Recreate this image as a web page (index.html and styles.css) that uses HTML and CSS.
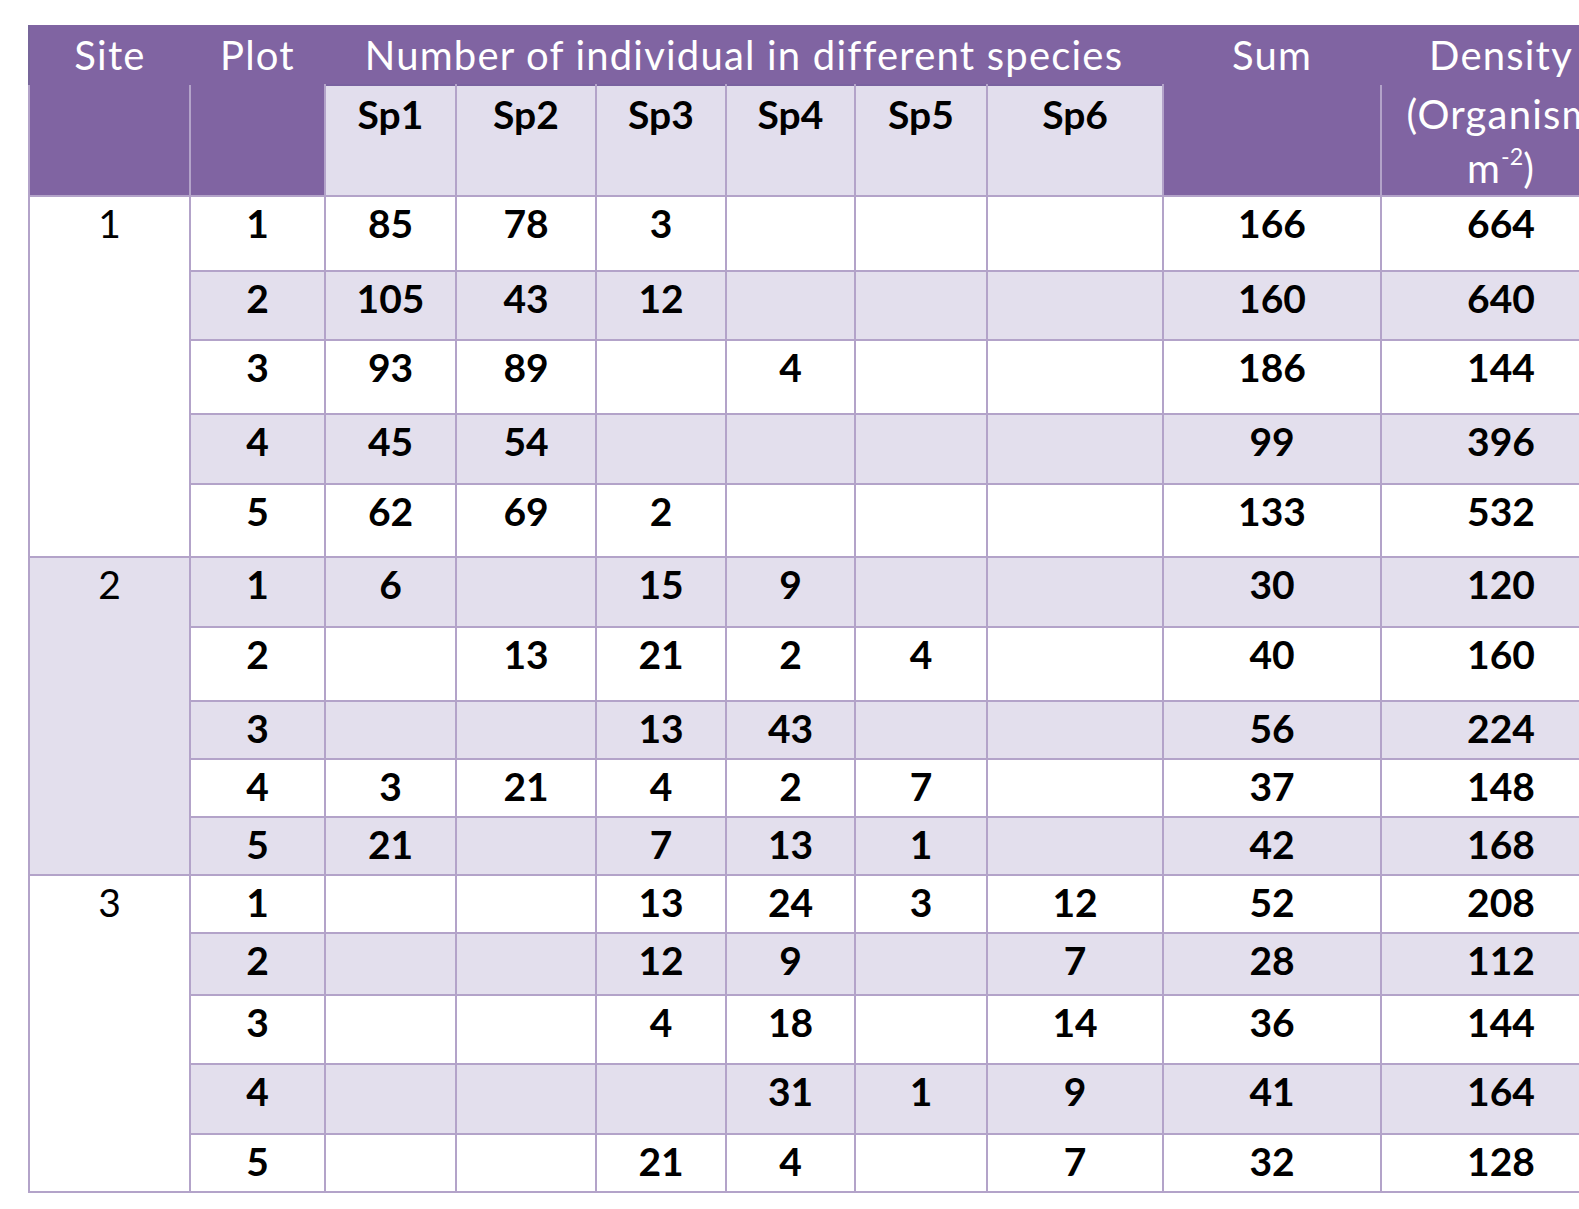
FILE: index.html
```html
<!DOCTYPE html>
<html lang="en">
<head>
<meta charset="utf-8">
<title>Number of individuals per species</title>
<link rel="stylesheet" href="styles.css">
</head>
<body>
<div class="page">
<table class="data">
  <colgroup>
    <col class="c-site"><col class="c-plot">
    <col class="c-sp1"><col class="c-sp2"><col class="c-sp3"><col class="c-sp4"><col class="c-sp5"><col class="c-sp6">
    <col class="c-sum"><col class="c-dens">
  </colgroup>
  <thead>
    <tr class="h1">
      <th class="first">Site</th><th>Plot</th>
      <th colspan="6">Number of individual in different species</th>
      <th>Sum</th><th>Density</th>
    </tr>
    <tr class="h2">
      <th class="blank"></th><th class="blank"></th>
      <th class="sp">Sp1</th><th class="sp">Sp2</th><th class="sp">Sp3</th><th class="sp">Sp4</th><th class="sp">Sp5</th><th class="sp">Sp6</th>
      <th class="blank"></th><th class="blank dens">(Organism<br><span class="unit">m<sup>-2</sup>)</span></th>
    </tr>
  </thead>
  <tbody>
    <tr class="r75"><td class="site" rowspan="5">1</td><td>1</td><td>85</td><td>78</td><td>3</td><td></td><td></td><td></td><td>166</td><td>664</td></tr>
    <tr class="alt r69"><td>2</td><td>105</td><td>43</td><td>12</td><td></td><td></td><td></td><td>160</td><td>640</td></tr>
    <tr class="r74"><td>3</td><td>93</td><td>89</td><td></td><td>4</td><td></td><td></td><td>186</td><td>144</td></tr>
    <tr class="alt r70"><td>4</td><td>45</td><td>54</td><td></td><td></td><td></td><td></td><td>99</td><td>396</td></tr>
    <tr class="r73"><td>5</td><td>62</td><td>69</td><td>2</td><td></td><td></td><td></td><td>133</td><td>532</td></tr>

    <tr class="alt r70"><td class="site shade" rowspan="5">2</td><td>1</td><td>6</td><td></td><td>15</td><td>9</td><td></td><td></td><td>30</td><td>120</td></tr>
    <tr class="r74"><td>2</td><td></td><td>13</td><td>21</td><td>2</td><td>4</td><td></td><td>40</td><td>160</td></tr>
    <tr class="alt r58"><td>3</td><td></td><td></td><td>13</td><td>43</td><td></td><td></td><td>56</td><td>224</td></tr>
    <tr class="r58"><td>4</td><td>3</td><td>21</td><td>4</td><td>2</td><td>7</td><td></td><td>37</td><td>148</td></tr>
    <tr class="alt r58"><td>5</td><td>21</td><td></td><td>7</td><td>13</td><td>1</td><td></td><td>42</td><td>168</td></tr>

    <tr class="r58"><td class="site" rowspan="5">3</td><td>1</td><td></td><td></td><td>13</td><td>24</td><td>3</td><td>12</td><td>52</td><td>208</td></tr>
    <tr class="alt r62"><td>2</td><td></td><td></td><td>12</td><td>9</td><td></td><td>7</td><td>28</td><td>112</td></tr>
    <tr class="r69"><td>3</td><td></td><td></td><td>4</td><td>18</td><td></td><td>14</td><td>36</td><td>144</td></tr>
    <tr class="alt r70"><td>4</td><td></td><td></td><td></td><td>31</td><td>1</td><td>9</td><td>41</td><td>164</td></tr>
    <tr class="r58"><td>5</td><td></td><td></td><td>21</td><td>4</td><td></td><td>7</td><td>32</td><td>128</td></tr>
  </tbody>
</table>
</div>
</body>
</html>
```

FILE: styles.css
```css
html, body {
  margin: 0;
  padding: 0;
  background: #ffffff;
  overflow: hidden;
}

.page {
  width: 1579px;
  overflow: hidden;
  padding: 25px 0 0 28px;
  box-sizing: border-box;
}

.data {
  border-collapse: collapse;
  table-layout: fixed;
  width: 1592px;
  font-family: Lato, "Liberation Sans", sans-serif;
  font-size: 39px;
  line-height: 56px;
  color: #000000;
}

.c-site { width: 161px; }
.c-plot { width: 135px; }
.c-sp1 { width: 131px; }
.c-sp2 { width: 140px; }
.c-sp3 { width: 130px; }
.c-sp4 { width: 129px; }
.c-sp5 { width: 132px; }
.c-sp6 { width: 176px; }
.c-sum { width: 218px; }
.c-dens { width: 240px; }

.data th,
.data td {
  padding: 0;
  text-align: center;
  vertical-align: top;
  border: 2px solid #b3a3c9;
  white-space: normal;
}

.h1 { height: 60px; }
.h1 th {
  background: #8064a2;
  color: #ffffff;
  font-size: 40px;
  font-weight: 400;
  letter-spacing: 1.2px;
  border-top: none;
  border-bottom: none;
  border-left: none;
  border-right: none;
  padding-top: 2px;
}
.h1 th.first { border-left: 2px solid #77669a; }

.h2 { height: 110px; }
.h2 th {
  font-weight: 400;
  border-top: none;
}
.h2 th.blank {
  background: #8064a2;
  color: #ffffff;
}
.h2 th.dens {
  font-size: 40px;
  letter-spacing: 1.2px;
  line-height: 54px;
  padding-top: 2px;
  white-space: nowrap;
}
.h2 th.sp {
  background: #e2deed;
  color: #000000;
  font-weight: 700;
  border-top: 2px solid #7a62a0;
}

.unit { white-space: nowrap; }
.h2 sup {
  font-size: 0.58em;
  line-height: 0;
  letter-spacing: 0;
  vertical-align: 0.78em;
}

.data td {
  font-weight: 700;
  background: #ffffff;
  line-height: 52px;
}
.data tr.alt td { background: #e3dfed; }
.data td.site { font-weight: 400; background: #ffffff; }
.data tr td.site.shade { background: #e3dfed; }

.r58 { height: 58px; }
.r62 { height: 62px; }
.r69 { height: 69px; }
.r70 { height: 70px; }
.r73 { height: 73px; }
.r74 { height: 74px; }
.r75 { height: 75px; }
```
